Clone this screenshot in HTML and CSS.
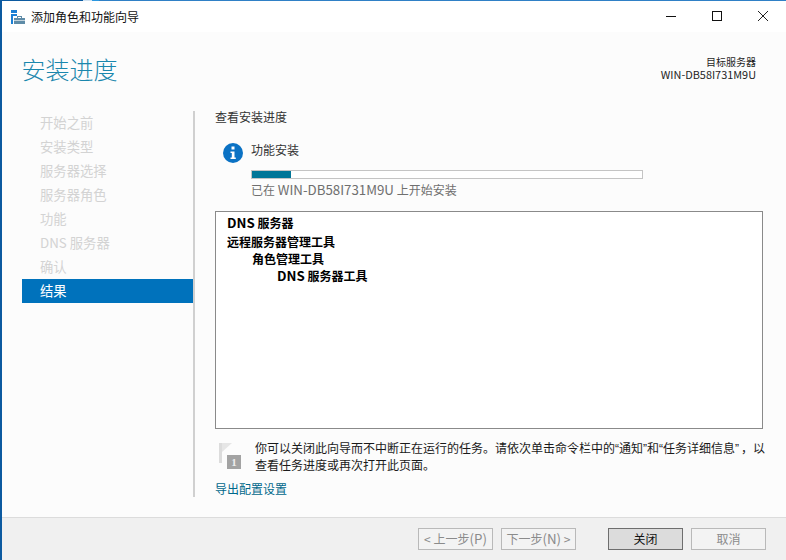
FILE: index.html
```html
<!DOCTYPE html>
<html lang="zh-CN">
<head>
<meta charset="utf-8">
<title>添加角色和功能向导</title>
<link rel="stylesheet" href="styles.css">
</head>
<body>
<div class="window">
  <div class="topline"></div>
  <div class="titlebar">
    <svg class="app-icon" width="14" height="14" viewBox="0 0 14 14">
      <rect x="0" y="0" width="6" height="3" fill="#1b7fd4"/>
      <rect x="0" y="4" width="6" height="2" fill="#1b7fd4"/>
      <rect x="0" y="6" width="2" height="8" fill="#1b7fd4"/>
      <rect x="3" y="8" width="11" height="6" fill="#5f8ca8"/>
      <rect x="6.5" y="6.5" width="4" height="2" fill="none" stroke="#5f8ca8"/>
      <rect x="3" y="10" width="11" height="1" fill="#c3d3dc"/>
    </svg>
    <span class="title-text">添加角色和功能向导</span>
    <div class="win-controls">
      <svg width="46" height="31" viewBox="0 0 46 31"><path d="M18 15.5H28" stroke="#111" fill="none"/></svg>
      <svg width="46" height="31" viewBox="0 0 46 31"><rect x="18.5" y="10.5" width="9" height="9" stroke="#111" fill="none"/></svg>
      <svg width="46" height="31" viewBox="0 0 46 31"><path d="M18 10L28 20M28 10L18 20" stroke="#222" fill="none"/></svg>
    </div>
  </div>
  <div class="client">
    <header class="head">
      <h1 class="page-title">安装进度</h1>
      <div class="target">
        <div class="target-label">目标服务器</div>
        <div class="target-name">WIN-DB58I731M9U</div>
      </div>
    </header>
    <div class="body">
      <nav class="steps">
        <div class="step">开始之前</div>
        <div class="step">安装类型</div>
        <div class="step">服务器选择</div>
        <div class="step">服务器角色</div>
        <div class="step">功能</div>
        <div class="step">DNS 服务器</div>
        <div class="step">确认</div>
        <div class="step current">结果</div>
      </nav>
      <main class="main">
        <div class="section-label">查看安装进度</div>
        <div class="status">
          <svg class="info" width="20" height="20" viewBox="0 0 20 20">
            <circle cx="10" cy="10" r="10" fill="#0b72c4"/>
            <rect x="8.5" y="3.5" width="3" height="3" fill="#fff"/>
            <path d="M7.5 8.5H11.5V14.5H12.8V16H7.5V14.5H8.8V10H7.5Z" fill="#fff"/>
          </svg>
          <div class="status-body">
            <div class="status-title">功能安装</div>
            <div class="progress"><div class="progress-fill"></div></div>
            <div class="status-note">已在 <span class="lat">WIN-DB58I731M9U</span> 上开始安装</div>
          </div>
        </div>
        <div class="results">
          <div class="r1 gap"><span class="lat">DNS</span> 服务器</div>
          <div class="r1">远程服务器管理工具</div>
          <div class="r2">角色管理工具</div>
          <div class="r3"><span class="lat">DNS</span> 服务器工具</div>
        </div>
        <div class="notice">
          <svg class="flag" width="26" height="28" viewBox="0 0 26 28">
            <rect x="0" y="0" width="3" height="20" fill="#dcdcdc"/>
            <path d="M3 0H13L3 9Z" fill="#e6e6e6"/>
            <rect x="8" y="12" width="14" height="14" fill="#a3a3a3"/>
            <text x="15" y="23" class="flag-num">1</text>
          </svg>
          <p class="notice-text">你可以关闭此向导而不中断正在运行的任务。请依次单击命令栏中的<span class="q">“</span>通知<span class="q">”</span>和<span class="q">“</span>任务详细信息<span class="q end">”</span>，以查看任务进度或再次打开此页面。</p>
        </div>
        <a class="export" href="#">导出配置设置</a>
      </main>
    </div>
    <footer class="footer">
      <button class="btn disabled">&lt; 上一步<span class="lat">(P)</span></button>
      <button class="btn disabled next">下一步<span class="lat">(N)</span> &gt;</button>
      <button class="btn primary">关闭</button>
      <button class="btn disabled">取消</button>
    </footer>
  </div>
</div>
</body>
</html>
```
FILE: styles.css
```css
* { box-sizing: border-box; }
html, body { margin: 0; padding: 0; }
body {
  width: 786px;
  height: 560px;
  overflow: hidden;
  font-family: "Noto Sans CJK SC", "Liberation Sans", sans-serif;
  font-size: 12px;
  color: #1a1a1a;
  background: #fff;
}
.window {
  width: 786px;
  height: 560px;
  display: flex;
  flex-direction: column;
  border-left: 2px solid #0c5aa0;
}
.topline {
  height: 1px;
  flex: none;
  background: linear-gradient(to right, #0c5aa0 0, #0c5aa0 81px, #cfe2f2 81px, #cfe2f2 90px, #2b98e0 90px, #2b98e0 97px, #2f80c6 97px);
}
.lat { font-size: 13.3px; }
.q { font-family: "Liberation Sans", sans-serif; }
.q.end { margin-right: 2px; }
.titlebar {
  height: 31px;
  flex: none;
  display: flex;
  align-items: center;
  background: #fff;
  padding-left: 9px;
}
.app-icon { flex: none; margin-top: 1px; }
.title-text { margin-left: 6px; line-height: 16px; color: #111; }
.win-controls { margin-left: auto; display: flex; }
.win-controls svg { display: block; }
.client {
  flex: 1;
  display: flex;
  flex-direction: column;
  background: #fcfcfc;
  min-height: 0;
}
.head {
  height: 79px;
  flex: none;
  display: flex;
  justify-content: space-between;
  padding: 0 30px 0 19.5px;
}
.page-title {
  margin: 19px 0 0;
  font-size: 24px;
  font-weight: 300;
  line-height: 36px;
  color: #1a87ad;
}
.target {
  margin-top: 23px;
  text-align: right;
  line-height: 12px;
  color: #1f1f1f;
}
.target-label { font-size: 10px; line-height: 13px; }
.target-name { font-size: 10.9px; }
.body { flex: 1; display: flex; min-height: 0; }
.steps {
  width: 173px;
  margin-left: 20px;
  border-right: 2px solid #d0d0d0;
  height: 386px;
  flex: none;
}
.step {
  height: 24px;
  width: 171px;
  line-height: 24px;
  padding-left: 18px;
  font-size: 13.33px;
  color: #d3d3d3;
}
.step.current { background: #0072bc; color: #fff; }
.main {
  margin-left: 20px;
  width: 554px;
  display: flex;
  flex-direction: column;
}
.section-label { line-height: 12px; color: #333; }
.status { display: flex; margin-top: 19px; margin-left: 8px; height: 59px; }
.info { flex: none; margin-top: 1px; }
.status-body { margin-left: 8px; width: 392px; }
.status-title { line-height: 16px; color: #333; }
.progress {
  height: 9px;
  margin-top: 12px;
  background: #fff;
  border: 1px solid #c4c4c4;
}
.progress-fill { width: 39px; height: 100%; background: #017698; }
.status-note { margin-top: 3px; line-height: 16px; color: #6f6f6f; }
.results {
  margin-top: 10px;
  height: 218px;
  width: 548px;
  flex: none;
  border: 1px solid #8a8a8a;
  background: #fff;
  padding: 2px 11px;
  font-weight: 700;
  color: #000;
  line-height: 17px;
}
.r1.gap { margin-bottom: 2px; }
.r2 { padding-left: 25px; }
.r3 { padding-left: 50px; }
.notice { display: flex; margin-top: 11px; }
.flag { flex: none; margin: 3px 0 0 4px; }
.flag-num { font-family: "Liberation Serif", serif; font-size: 11px; font-weight: 700; fill: #eee; text-anchor: middle; }
.notice-text {
  margin: 0 0 0 10px;
  width: 514px;
  line-height: 15px;
  color: #1a1a1a;
}
.export {
  margin-top: 9px;
  color: #00688b;
  text-decoration: none;
  line-height: 16px;
  width: 72px;
}
.footer {
  height: 43px;
  flex: none;
  border-top: 1px solid #dcdcdc;
  background: #f0f0f0;
  display: flex;
  align-items: flex-start;
  padding: 10px 0 0 416px;
}
.btn {
  width: 75px;
  height: 22px;
  padding: 0;
  font: inherit;
  background: #f3f3f3;
  line-height: 18px;
}
.btn.disabled { border: 1px solid #b9b9b9; color: #8b8b8b; }
.btn.next { margin-left: 8px; }
.btn.primary {
  margin-left: 32px;
  background: #dcdcdc;
  border: 1px solid #6e6e6e;
  color: #111;
}
.btn.primary + .btn { margin-left: 8px; }
```
